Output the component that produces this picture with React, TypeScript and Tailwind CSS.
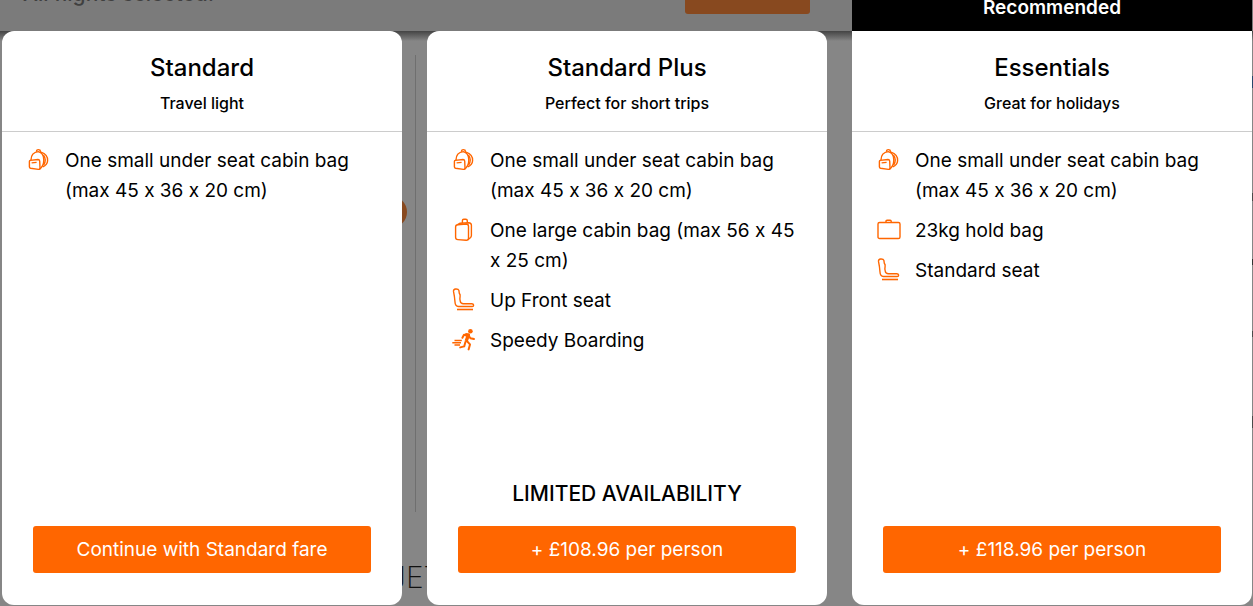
import type { ReactNode } from 'react';

type IconName = 'backpack' | 'cabinBag' | 'holdBag' | 'seat' | 'speedy';

interface Feature {
  icon: IconName;
  label: string;
}

interface Fare {
  name: string;
  tagline: string;
  features: Feature[];
  cta: string;
  recommended?: boolean;
  notice?: string;
}

const UNDER_SEAT_BAG: Feature = {
  icon: 'backpack',
  label: 'One small under seat cabin bag (max 45 x 36 x 20 cm)',
};

const FARES: Fare[] = [
  {
    name: 'Standard',
    tagline: 'Travel light',
    features: [UNDER_SEAT_BAG],
    cta: 'Continue with Standard fare',
  },
  {
    name: 'Standard Plus',
    tagline: 'Perfect for short trips',
    features: [
      UNDER_SEAT_BAG,
      {
        icon: 'cabinBag',
        label: 'One large cabin bag (max 56 x 45 x 25 cm)',
      },
      { icon: 'seat', label: 'Up Front seat' },
      { icon: 'speedy', label: 'Speedy Boarding' },
    ],
    cta: '+ £108.96 per person',
    notice: 'LIMITED AVAILABILITY',
  },
  {
    name: 'Essentials',
    tagline: 'Great for holidays',
    features: [
      UNDER_SEAT_BAG,
      { icon: 'holdBag', label: '23kg hold bag' },
      { icon: 'seat', label: 'Standard seat' },
    ],
    cta: '+ £118.96 per person',
    recommended: true,
  },
];

const ICONS: Record<IconName, ReactNode> = {
  backpack: (
    <>
      <path d="M3.2 12.4 L11 11.5 Q12.5 11.5 12.7 13 L13 20 Q12.9 21.6 11.4 21.4 L3.6 20.3 Q2.4 20 2.4 18.8 L2.4 13.5 Q2.4 12.5 3.2 12.4 Z" />
      <path d="M4.6 14.9 L9.6 14.4" />
      <path d="M4 12 C4 7.5 6.5 4.2 11.3 3.6 C15.2 4.6 16.8 8 16.8 12 C16.8 16 16 18.5 12.6 21.2" />
      <path d="M9.4 3.8 L9.8 2.2 Q11.2 1 13 2.2 L13.6 4" />
      <path d="M14 4.2 C18.8 5.8 20.8 9.4 20.6 12.8 C20.4 15.6 18.6 17.8 15.8 18.8" />
      <path d="M16.4 7 C18.6 10 18.6 14 16.6 17.2" />
    </>
  ),
  cabinBag: (
    <>
      <path d="M5.8 6.8 L14.2 6 Q16.4 6 16.5 8.2 V20 Q16.4 22.4 14.2 22.3 L5.8 21.6 Q3.6 21.4 3.6 19.2 V9 Q3.6 7 5.8 6.8 Z" />
      <path d="M5.6 6.6 L8 5.2 L16.8 4.8 Q19.3 5 19.4 7.2 V17.6 Q19.4 18.8 18.6 19.6 L15.6 22" />
      <path d="M10.4 5 V2.6 Q10.4 1.4 11.8 1.3 H13.8 Q15.3 1.3 15.3 2.8 V4.8" />
    </>
  ),
  holdBag: (
    <>
      <rect x="1" y="4.5" width="22" height="16" rx="1.6" />
      <path d="M9 4.5 V3.2 Q9 2.2 10 2.2 H13.2 Q14.2 2.2 14.2 3.2 V4.5" />
    </>
  ),
  seat: (
    <>
      <path d="M3.6 1 Q1.4 1.2 1.5 3.4 Q2.6 8.5 3 14 Q3.2 18.4 6.4 18.5 H20.2 Q21.6 18.4 21.6 17.2 Q21.4 15.8 19.8 15.7 H11.4 Q8.6 15.6 8.3 13.4 Q7.6 10.5 8.1 8.4 Q8.5 6.8 7.3 5.3 L6.9 2.4 Q6.4 0.8 3.6 1 Z" />
      <path d="M5 21.5 H21" strokeWidth="1.6" />
    </>
  ),
  speedy: (
    <>
      <circle cx="18.4" cy="3.2" r="2.3" fill="currentColor" stroke="none" />
      <path d="M2.5 12.4 H9.8 M0.3 14.7 H9 M2.5 17 H8" strokeWidth="1.5" />
      <path
        d="M13.2 6.6 L16.4 7 L14.2 13"
        strokeWidth="3.4"
        strokeLinejoin="round"
      />
      <path
        d="M10.4 9.8 L12 6.8 L16.4 7.2 L18.4 10.2 L22 11 M14.6 12.8 L18 16.4 L16.6 21.4 M13.4 14 L12.2 18.4 L8.2 19.4"
        strokeWidth="2"
        strokeLinejoin="round"
        strokeLinecap="round"
      />
    </>
  ),
};

const FeatureIcon = ({ name }: { name: IconName }) => (
  <svg
    viewBox="0 0 24 24"
    className="mt-0.5 size-6 shrink-0 text-[#ff6600]"
    fill="none"
    stroke="currentColor"
    strokeWidth="1.4"
    aria-hidden="true"
  >
    {ICONS[name]}
  </svg>
);

const FareCard = ({ fare }: { fare: Fare }) => (
  <section className="flex flex-col">
    <div
      className={`flex h-[31px] shrink-0 justify-center ${
        fare.recommended ? 'bg-black' : ''
      }`}
    >
      {fare.recommended && (
        <span className="text-[19px] leading-4 font-semibold text-white">
          Recommended
        </span>
      )}
    </div>

    <div
      className={`flex flex-1 flex-col bg-white ${
        fare.recommended ? 'rounded-b-xl' : 'rounded-xl'
      }`}
    >
      <header className="border-b border-[#cccccc] pt-[21px] pb-4 text-center">
        <h2 className="text-2xl leading-8 font-medium">{fare.name}</h2>
        <p className="mt-[7px] text-base leading-6 font-medium">
          {fare.tagline}
        </p>
      </header>

      <ul className="flex flex-col gap-2.5 px-[25px] pt-3.5">
        {fare.features.map((feature) => (
          <li key={feature.label} className="flex gap-3.5">
            <FeatureIcon name={feature.icon} />
            <span className="text-[19px] leading-[30px]">{feature.label}</span>
          </li>
        ))}
      </ul>

      <div className="mt-auto px-[31px] pb-8 text-center">
        {fare.notice && (
          <p className="mb-4 text-[21px] leading-8 font-medium">
            {fare.notice}
          </p>
        )}
        <button
          type="button"
          className="h-[47px] w-full rounded-[3px] bg-[#ff6600] pt-0.5 text-[19px] text-white"
        >
          {fare.cta}
        </button>
      </div>
    </div>
  </section>
);

// Dimmed booking page that sits behind the fare cards
const Backdrop = () => (
  <div
    className="absolute inset-0 flex flex-col overflow-hidden bg-[#868686]"
    aria-hidden="true"
  >
    <div className="flex h-[31px] shrink-0 bg-[#7b7b7b]">
      <div className="flex w-[810px] items-start justify-between pl-[23px]">
        <span className="-mt-[18px] text-[21px] leading-6 font-medium text-[#404040]">
          All flights selected.
        </span>
        <span className="h-3.5 w-[125px] rounded-b-[3px] bg-[#88491f]" />
      </div>
    </div>
    <div className="h-2.5 shrink-0 bg-linear-to-b from-[#444444] to-[#868686]" />
    <div className="flex justify-between">
      <div className="mt-3.5 flex h-[457px] w-[416px] justify-end border-r border-[#6f6f6f] pt-[141px] pr-2">
        <span className="size-8 rounded-full bg-[#88491f]" />
      </div>
      <div className="flex w-px flex-col pt-[35px]">
        <span className="h-3 bg-[#27476b]" />
        <span className="mt-[105px] h-2 bg-[#4a4a4a]" />
        <span className="mt-[58px] h-1.5 bg-[#333333]" />
        <span className="mt-[66px] h-1.5 bg-[#4a4a4a]" />
        <span className="mt-[79px] h-3 bg-[#4a4a4a]" />
      </div>
    </div>
    <p className="mt-12 pl-[389px] text-[30px] leading-[34px] font-extralight text-[#111111]">
      JET
    </p>
  </div>
);

export default function App() {
  return (
    <main className="relative flex min-h-screen font-[Inter,'Liberation_Sans',sans-serif] text-black [font-feature-settings:'calt'_0]">
      <Backdrop />
      <div className="relative grid flex-1 grid-cols-3 gap-[25px] pr-px pb-px pl-0.5">
        {FARES.map((fare) => (
          <FareCard key={fare.name} fare={fare} />
        ))}
      </div>
    </main>
  );
}
